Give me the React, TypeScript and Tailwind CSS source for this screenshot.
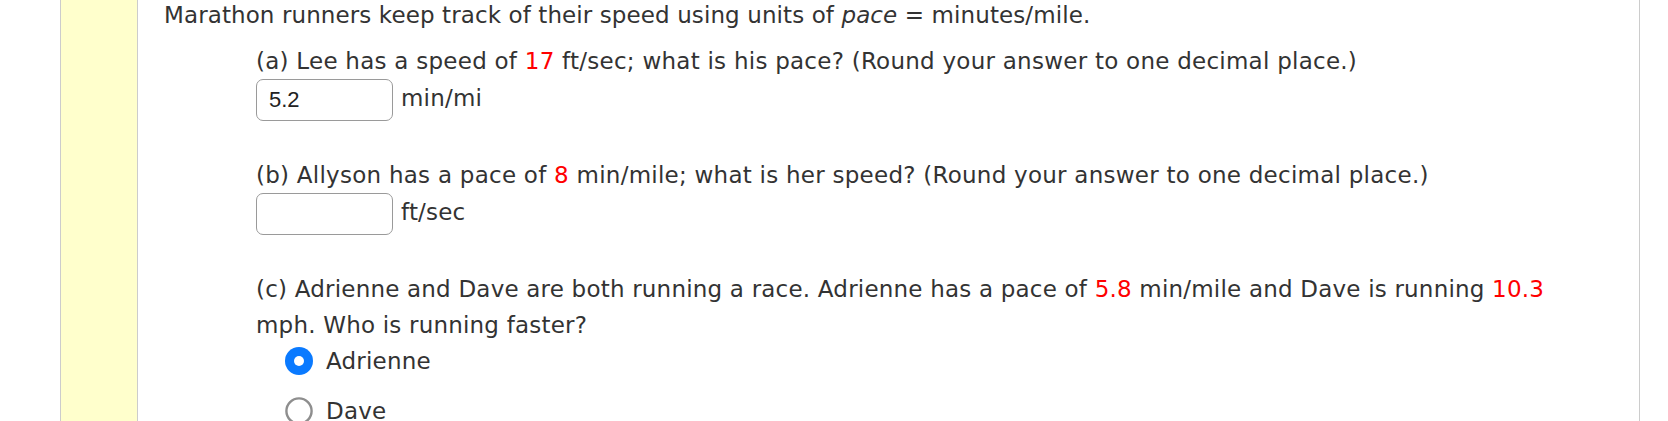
import React from "react";

const font = { fontFamily: '"DejaVu Sans", Verdana, sans-serif' };

function Red({ children }: { children: React.ReactNode }) {
  return <span className="text-[#ff0000]">{children}</span>;
}

function Box({ value }: { value?: string }) {
  return (
    <div className="w-[137px] h-[42px] shrink-0 rounded-[7px] border border-[#9a9a9a] bg-white flex items-center pl-[12px] text-[22px] tracking-normal text-[#222] [font-family:'Liberation_Sans',Arial,sans-serif]">
      {value}
    </div>
  );
}

function Radio({ checked, label }: { checked?: boolean; label: string }) {
  return (
    <div className="flex items-start h-[50px]">
      <svg width="28" height="28" viewBox="0 0 28 28" className="mt-[4px] shrink-0">
        {checked ? (
          <>
            <circle cx="14" cy="14" r="14" fill="#0a7aff" />
            <circle cx="14" cy="14" r="5" fill="#ffffff" />
          </>
        ) : (
          <circle cx="14" cy="14" r="12.6" fill="#ffffff" stroke="#8e8e8e" strokeWidth="2.4" />
        )}
      </svg>
      <span className="ml-[13px]">{label}</span>
    </div>
  );
}

export default function App() {
  return (
    <div
      className="flex h-[421px] w-[1668px] overflow-hidden bg-white text-[23px] leading-[36px] tracking-[0.2px] text-[#333333]"
      style={font}
    >
      <div className="w-[60px] shrink-0" />
      <div className="w-[78px] shrink-0 border-x border-[#cccccc] bg-[#ffffcc]" />
      <div className="w-[1502px] shrink-0 border-r border-[#cccccc] pl-[26px]">
        <p className="mt-[-3px] whitespace-nowrap tracking-[0.1px]">
          Marathon runners keep track of their speed using units of <i>pace</i> = minutes/mile.
        </p>
        <div className="ml-[92px] mt-[10px]">
          <p className="whitespace-nowrap tracking-[0.25px]">
            (a) Lee has a speed of <Red>17</Red> ft/sec; what is his pace? (Round your answer to one decimal place.)
          </p>
          <div className="flex items-start">
            <Box value="5.2" />
            <span className="ml-[8px] mt-px">min/mi</span>
          </div>

          <p className="mt-[36px] whitespace-nowrap tracking-[0.25px]">
            (b) Allyson has a pace of <Red>8</Red> min/mile; what is her speed? (Round your answer to one decimal place.)
          </p>
          <div className="flex items-start">
            <Box />
            <span className="ml-[8px] mt-px">ft/sec</span>
          </div>

          <p className="mt-[36px] whitespace-nowrap">
            (c) Adrienne and Dave are both running a race. Adrienne has a pace of <Red>5.8</Red> min/mile and Dave is running <Red>10.3</Red>
            <br />
            mph. Who is running faster?
          </p>
          <div className="ml-[29px]">
            <Radio checked label="Adrienne" />
            <Radio label="Dave" />
          </div>
        </div>
      </div>
    </div>
  );
}
